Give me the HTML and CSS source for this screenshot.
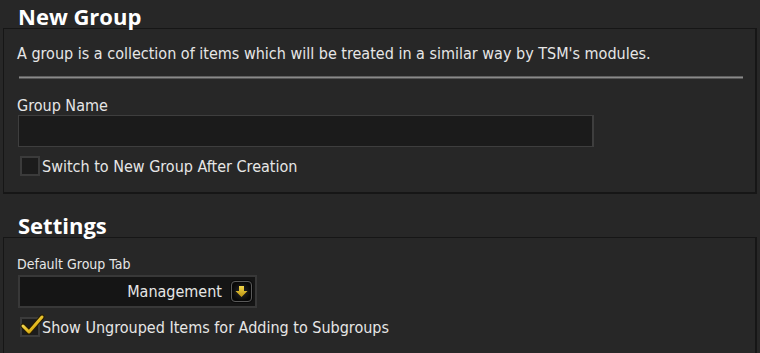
FILE: index.html
```html
<!DOCTYPE html>
<html>
<head>
<meta charset="utf-8">
<link rel="stylesheet" href="styles.css">
</head>
<body>
<h2 class="section-title">New Group</h2>
<div class="panel panel-first">
  <p class="desc">A group is a collection of items which will be treated in a similar way by TSM's modules.</p>
  <div class="separator"></div>
  <label class="field-label">Group Name</label>
  <div class="text-input"></div>
  <div class="check-row">
    <span class="checkbox"></span>
    <span class="check-text">Switch to New Group After Creation</span>
  </div>
</div>
<h2 class="section-title section-title-second">Settings</h2>
<div class="panel panel-second">
  <label class="field-label small">Default Group Tab</label>
  <div class="dropdown">
    <span class="dropdown-value">Management</span>
    <span class="dropdown-button">
      <svg width="21" height="21" viewBox="0 0 21 21">
        <defs>
          <linearGradient id="gold" x1="0" y1="0" x2="0" y2="1">
            <stop offset="0" stop-color="#f3d64a"/>
            <stop offset="1" stop-color="#b8900f"/>
          </linearGradient>
        </defs>
        <polygon points="8,5 13,5 13,10 16.5,10 10.5,16 4.5,10 8,10" fill="url(#gold)"/>
      </svg>
    </span>
  </div>
  <div class="check-row check-row-second">
    <span class="checkbox checked">
      <svg class="checkmark" width="26" height="24" viewBox="0 0 26 24">
        <defs>
          <linearGradient id="chk" x1="0" y1="0" x2="1" y2="1">
            <stop offset="0" stop-color="#fff07a"/>
            <stop offset="0.6" stop-color="#e3b81c"/>
            <stop offset="1" stop-color="#9a7208"/>
          </linearGradient>
        </defs>
        <path d="M3 13 L9 19 L22 4" fill="none" stroke="#2a1e00" stroke-width="5" stroke-linecap="round" stroke-linejoin="round"/>
        <path d="M3 13 L9 19 L22 4" fill="none" stroke="url(#chk)" stroke-width="3" stroke-linecap="round" stroke-linejoin="round"/>
      </svg>
    </span>
    <span class="check-text">Show Ungrouped Items for Adding to Subgroups</span>
  </div>
</div>
</body>
</html>
```
FILE: styles.css
```css
html, body {
  margin: 0;
  padding: 0;
  background: #272727;
  height: 353px;
  overflow: hidden;
}
body {
  font-family: "Liberation Sans Narrow", "DejaVu Sans Condensed", "Liberation Sans", sans-serif;
  color: #e6e6e6;
  font-size: 16px;
}
.section-title {
  margin: 0;
  padding: 4px 0 0 18px;
  height: 24px;
  font-family: "Open Sans", sans-serif;
  font-weight: 700;
  font-size: 22px;
  line-height: 24px;
  color: #ffffff;
}
.section-title-second {
  margin-top: 15px;
}
.panel {
  margin: 0 3px 0 3px;
  border: 1px solid #161616;
  border-right-width: 2px;
  border-bottom-width: 2px;
  background: #272727;
  padding: 15px 0 16px 13px;
}
.panel-second {
  padding-top: 18px;
  padding-bottom: 0;
  border-bottom: none;
  height: 97px;
  overflow: hidden;
}
.desc {
  margin: 0;
  line-height: 20px;
  height: 20px;
  white-space: nowrap;
}
.separator {
  margin: 12px 12px 0 2px;
  height: 3px;
  background: linear-gradient(#4a4a4a, #8a8a8a 50%, #3a3a3a);
}
.field-label {
  display: block;
  margin-top: 17px;
  line-height: 19px;
  height: 19px;
}
.field-label.small {
  margin-top: 0;
  font-size: 14px;
  line-height: 17px;
  height: 17px;
  margin-bottom: 2px;
}
.text-input {
  margin-left: 1px;
  width: 573px;
  height: 30px;
  background: #1b1b1b;
  border: 1px solid #3e3e3e;
  border-right-width: 2px;
}
.check-row {
  display: flex;
  align-items: center;
  margin-top: 9px;
  margin-left: 3px;
  height: 20px;
}
.check-row-second {
  margin-top: 9px;
}
.checkbox {
  position: relative;
  width: 16px;
  height: 16px;
  border: 2px solid #3b3b3b;
  background: #1c1c1c;
  flex: none;
}
.checkmark {
  position: absolute;
  left: -2px;
  top: -6px;
}
.check-text {
  margin-left: 2px;
  padding-top: 2px;
  line-height: 20px;
  white-space: nowrap;
}
.dropdown {
  margin-left: 1px;
  width: 235px;
  height: 29px;
  background: #151515;
  border: 2px solid #383838;
  display: flex;
  align-items: center;
  justify-content: flex-end;
  box-sizing: content-box;
}
.dropdown-value {
  margin-right: 9px;
  line-height: 20px;
}
.dropdown-button {
  width: 19px;
  height: 19px;
  margin-right: 3px;
  border: 1px solid #5a5a5a;
  border-radius: 4px;
  background: radial-gradient(circle at 50% 50%, #2a2a2a, #080808 70%);
  box-shadow: 0 0 0 1px #0a0a0a;
  display: flex;
  align-items: center;
  justify-content: center;
  overflow: hidden;
}
.dropdown-button svg {
  flex: none;
}
```
